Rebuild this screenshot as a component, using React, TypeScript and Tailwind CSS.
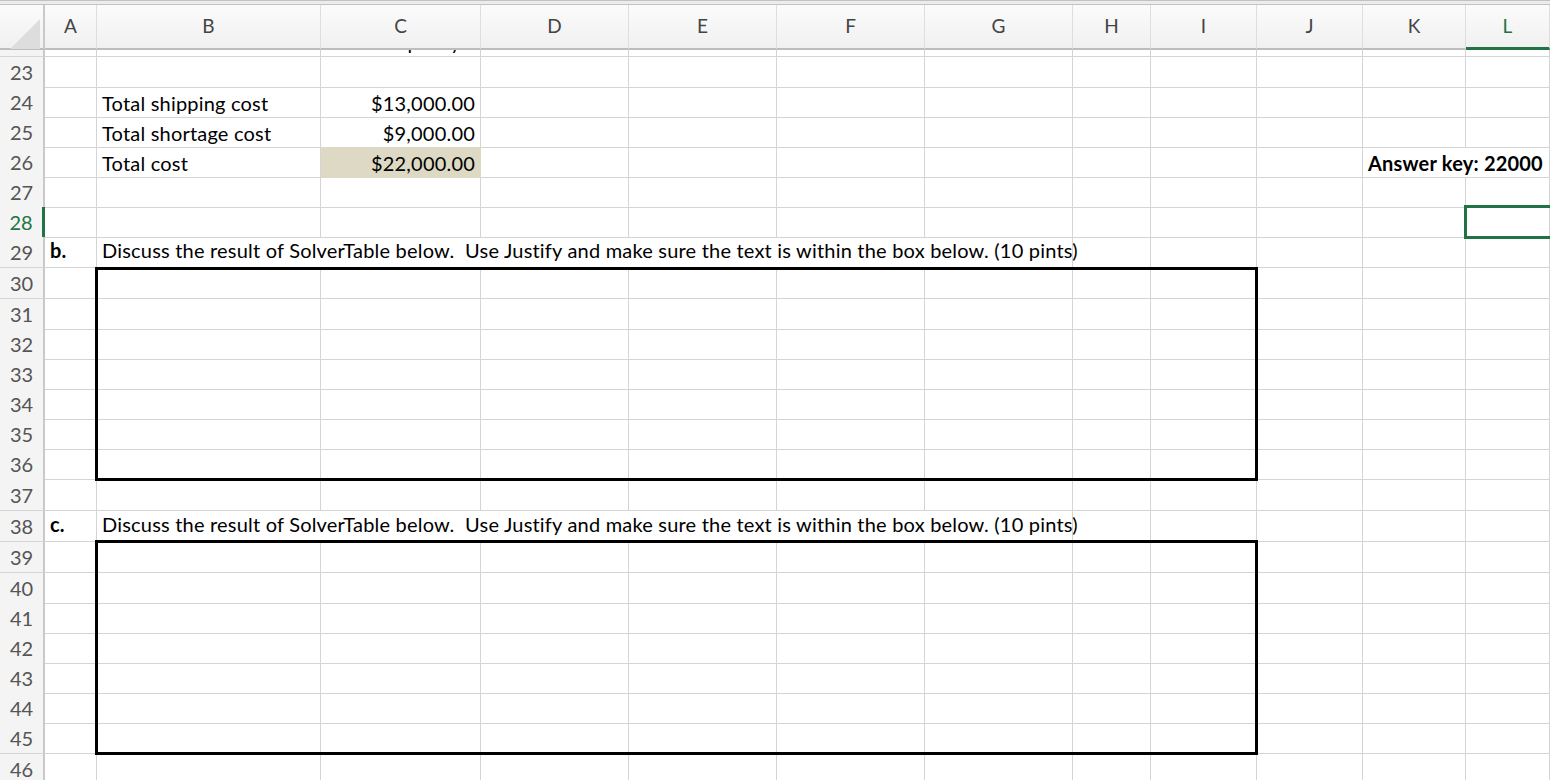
import React from 'react';

// column template shared by header, body rows and the overlay layer
const GRID = 'grid grid-cols-[45px_52px_224px_160px_148px_148px_148px_148px_78px_106px_106px_103px_84px]';

const LETTERS = ['A', 'B', 'C', 'D', 'E', 'F', 'G', 'H', 'I', 'J', 'K', 'L'];

const SPAN: Record<number, string> = {
    1: 'col-span-1',
    2: 'col-span-2',
    6: 'col-span-6',
};

type CellDef = {
    span?: number;
    text?: string;
    align?: 'left' | 'right';
    bold?: boolean;
    fill?: boolean;
};

type RowDef = {
    n: number;
    h: string;
    pad?: string;
    cells?: CellDef[];
};

const DISCUSS = 'Discuss the result of SolverTable below.  Use Justify and make sure the text is within the box below. (10 pints)';

const blank = (count: number): CellDef[] => Array.from({ length: count }, () => ({}));

const ROWS: RowDef[] = [
    { n: 23, h: 'h-[30px]' },
    { n: 24, h: 'h-[30px]', cells: [{}, { text: 'Total shipping cost' }, { text: '$13,000.00', align: 'right' }, ...blank(9)] },
    { n: 25, h: 'h-[30px]', cells: [{}, { text: 'Total shortage cost' }, { text: '$9,000.00', align: 'right' }, ...blank(9)] },
    {
        n: 26,
        h: 'h-[30px]',
        cells: [{}, { text: 'Total cost' }, { text: '$22,000.00', align: 'right', fill: true }, ...blank(7), { span: 2, text: 'Answer key: 22000', bold: true }],
    },
    { n: 27, h: 'h-[30px]' },
    { n: 28, h: 'h-[30px]' },
    { n: 29, h: 'h-[31px]', pad: 'pb-[7px]', cells: [{ text: 'b.', bold: true }, { span: 6, text: DISCUSS }, ...blank(5)] },
    { n: 30, h: 'h-[31px]' },
    { n: 31, h: 'h-[30px]' },
    { n: 32, h: 'h-[30px]' },
    { n: 33, h: 'h-[30px]' },
    { n: 34, h: 'h-[30px]' },
    { n: 35, h: 'h-[30px]' },
    { n: 36, h: 'h-[30px]' },
    { n: 37, h: 'h-[32px]' },
    { n: 38, h: 'h-[31px]', pad: 'pb-[7px]', cells: [{ text: 'c.', bold: true }, { span: 6, text: DISCUSS }, ...blank(5)] },
    { n: 39, h: 'h-[31px]' },
    { n: 40, h: 'h-[30px]' },
    { n: 41, h: 'h-[30px]' },
    { n: 42, h: 'h-[30px]' },
    { n: 43, h: 'h-[30px]' },
    { n: 44, h: 'h-[30px]' },
    { n: 45, h: 'h-[31px]' },
    { n: 46, h: 'h-[30px]' },
];

const App: React.FC = () => {
    return (
        <div className="w-[1550px] h-[780px] overflow-hidden bg-white [font-family:Lato,'Noto_Sans',sans-serif] text-black">
            {/* window chrome strip above the column headers */}
            <div className="h-[5px] bg-[#ececec] border-y border-[#c2c2c2]"></div>

            {/* column headers */}
            <div className={`${GRID} h-[45px] bg-gradient-to-b from-[#fbfbfb] to-[#f0f0f0]`}>
                <div className="relative border-r-2 border-b-2 border-r-[#c9c9c9] border-b-[#bdbdbd]">
                    <svg className="absolute left-[10px] top-[14px]" width="30" height="30" viewBox="0 0 30 30">
                        <polygon points="30,0 30,30 0,30" fill="#dddddd" />
                    </svg>
                </div>
                {LETTERS.map((l) => (
                    <div
                        key={l}
                        className={`flex items-center justify-center text-[19px] border-r border-r-[#dedede] ${
                            l === 'L' ? 'border-b-[3px] border-b-[#217346] text-[#217346]' : 'border-b-2 border-b-[#bdbdbd] text-[#444444]'
                        }`}
                    >
                        {l}
                    </div>
                ))}
            </div>

            {/* row 22, mostly scrolled out of view */}
            <div className={`${GRID} h-[7px]`}>
                <div className="bg-[#f4f4f4] border-r-2 border-r-[#c9c9c9] border-b border-b-[#d6d6d6]"></div>
                {LETTERS.map((l) => (
                    <div key={l} className="overflow-hidden border-r border-b border-[#d4d4d4]">
                        {l === 'C' && <div className="-mt-[18px] text-center text-[20px] leading-none whitespace-nowrap">Total capacity</div>}
                    </div>
                ))}
            </div>

            <div className="relative">
                {ROWS.map((row) => {
                    const cells = row.cells ?? blank(12);
                    const active = row.n === 28;
                    return (
                        <div key={row.n} className={`${GRID} ${row.h}`}>
                            <div
                                className={`flex items-center justify-center bg-[#f4f4f4] border-b border-b-[#d6d6d6] text-[20px] ${
                                    active ? 'border-r-[3px] border-r-[#217346] text-[#217346]' : 'border-r-2 border-r-[#c9c9c9] text-[#555555]'
                                }`}
                            >
                                {row.n}
                            </div>
                            {cells.map((c, i) => (
                                <div
                                    key={i}
                                    className={`${SPAN[c.span ?? 1]} flex items-end leading-none whitespace-pre text-[20px] tracking-[0.2px] border-r border-b ${
                                        c.fill ? 'bg-[#ddd9c4] border-[#ddd9c4]' : 'border-[#d4d4d4]'
                                    } ${row.pad ?? 'pb-[4px]'} ${c.align === 'right' ? 'justify-end pr-[5px]' : 'pl-[5px]'} ${c.bold ? 'font-bold' : ''}`}
                                >
                                    {c.text}
                                </div>
                            ))}
                        </div>
                    );
                })}

                {/* cell borders and the selection drawn over the sheet */}
                <div className={`${GRID} absolute inset-0 pointer-events-none grid-rows-[30px_30px_30px_30px_30px_30px_31px_31px_30px_30px_30px_30px_30px_30px_32px_31px_31px_30px_30px_30px_30px_30px_31px_30px]`}>
                    <div className="col-start-3 col-end-11 row-start-8 row-end-15 -mt-[1px] -mb-[2px] -ml-[2px] -mr-[1px] border-[3px] border-black"></div>
                    <div className="col-start-3 col-end-11 row-start-17 row-end-24 -mt-[2px] -mb-[1px] -ml-[2px] -mr-[1px] border-[3px] border-black"></div>
                    <div className="col-start-13 row-start-6 -mt-[2px] -mb-[2px] -ml-[2px] -mr-[4px] border-[3px] border-[#217346]"></div>
                </div>
            </div>
        </div>
    );
};

export default App;
